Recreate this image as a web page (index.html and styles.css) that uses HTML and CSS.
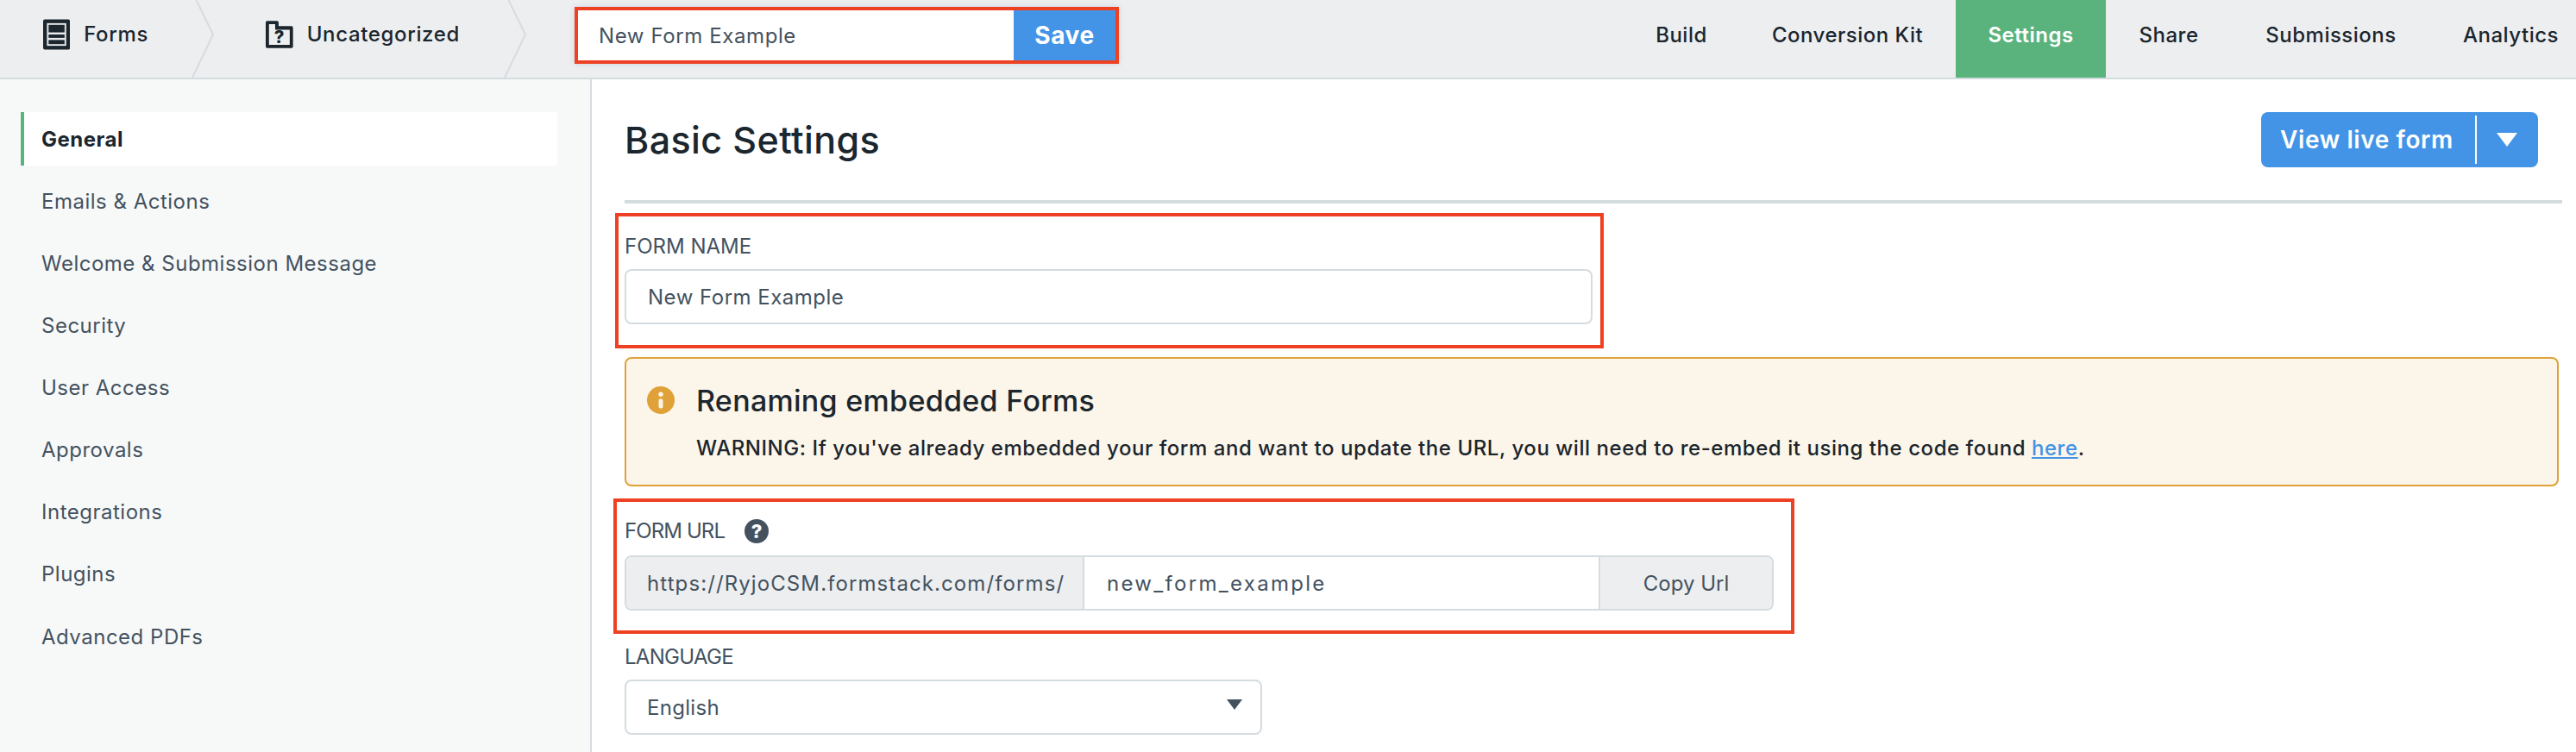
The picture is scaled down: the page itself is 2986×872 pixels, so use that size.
FILE: index.html
```html
<!DOCTYPE html>
<html lang="en">
<head>
<meta charset="utf-8">
<title>Basic Settings</title>
<link rel="stylesheet" href="styles.css">
</head>
<body>
<header class="topbar">
  <div class="crumb crumb-forms">
    <svg viewBox="0 0 32 36" width="32" height="36"><rect width="32" height="36" rx="2" fill="#1b262e"/><rect x="4.5" y="4.5" width="23" height="27" fill="#e8eaec"/><rect x="6.5" y="6.5" width="19" height="9" fill="#1b262e"/><rect x="6.5" y="18" width="19" height="4" fill="#1b262e"/><rect x="6.5" y="24.5" width="19" height="5" fill="#1b262e"/></svg>
    <span class="crumb-text">Forms</span>
  </div>
  <svg class="chev chev-a" viewBox="0 0 26 90" width="26" height="90"><path d="M5.5 0 L25 40 L1 90" fill="none" stroke="#d5dcdf" stroke-width="2"/></svg>
  <div class="crumb crumb-unc">
    <svg viewBox="0 0 36 36" width="36" height="36"><path d="M2 0H15a2 2 0 0 1 2 2V7H34a2 2 0 0 1 2 2V34a2 2 0 0 1-2 2H2a2 2 0 0 1-2-2V2a2 2 0 0 1 2-2Z" fill="#1b262e"/><path d="M4.3 4.3H12.5V11.6H31.7V31.7H4.3Z" fill="#edeef0"/><text x="18" y="29" text-anchor="middle" class="folder-q">?</text></svg>
    <span class="crumb-text">Uncategorized</span>
  </div>
  <svg class="chev chev-b" viewBox="0 0 26 90" width="26" height="90"><path d="M5.5 0 L25 40 L1 90" fill="none" stroke="#d5dcdf" stroke-width="2"/></svg>
  <div class="namebox">
    <span class="name-field">New Form Example</span>
    <button class="save">Save</button>
  </div>
  <nav class="tabs">
    <a class="tab">Build</a>
    <a class="tab">Conversion Kit</a>
    <a class="tab tab-active">Settings</a>
    <a class="tab">Share</a>
    <a class="tab">Submissions</a>
    <a class="tab">Analytics</a>
  </nav>
</header>
<div class="page">
  <aside class="side">
    <a class="side-item side-active">General</a>
    <a class="side-item">Emails &amp; Actions</a>
    <a class="side-item">Welcome &amp; Submission Message</a>
    <a class="side-item">Security</a>
    <a class="side-item">User Access</a>
    <a class="side-item">Approvals</a>
    <a class="side-item">Integrations</a>
    <a class="side-item">Plugins</a>
    <a class="side-item">Advanced PDFs</a>
  </aside>
  <main class="main">
    <div class="head">
      <h1 class="title">Basic Settings</h1>
      <div class="live">
        <span class="live-text">View live form</span>
        <span class="live-div"></span>
        <span class="tri tri-white"></span>
      </div>
    </div>
    <hr class="rule">
    <section class="annot annot-name">
      <label class="label">FORM NAME</label>
      <div class="input">New Form Example</div>
    </section>
    <section class="alert">
      <div class="alert-head">
        <svg viewBox="0 0 32 32" width="32" height="32"><circle cx="16" cy="16" r="16" fill="#dfa138"/><circle cx="16" cy="9.3" r="2.7" fill="#fcf5e9"/><rect x="13.5" y="14.5" width="5" height="11" rx="2" fill="#fcf5e9"/></svg>
        <h2 class="alert-title">Renaming embedded Forms</h2>
      </div>
      <p class="alert-body">WARNING: If you've already embedded your form and want to update the URL, you will need to re-embed it using the code found <a class="link">here</a>.</p>
    </section>
    <section class="annot annot-url">
      <div class="label-row">
        <label class="label label-url">FORM URL</label>
        <svg viewBox="0 0 28 28" width="28" height="28"><circle cx="14" cy="14" r="14" fill="#44525f"/><text x="14" y="22" text-anchor="middle" class="help-q">?</text></svg>
      </div>
      <div class="group">
        <span class="prefix">https://RyjoCSM.formstack.com/forms/</span>
        <span class="slug">new_form_example</span>
        <span class="copy">Copy Url</span>
      </div>
    </section>
    <label class="label label-lang">LANGUAGE</label>
    <div class="select">
      <span class="select-text">English</span>
      <span class="tri tri-dark"></span>
    </div>
  </main>
</div>
</body>
</html>
```
FILE: styles.css
```css
* { box-sizing: border-box; }
html, body { margin: 0; padding: 0; }
body {
  width: 2986px;
  height: 872px;
  overflow: hidden;
  background: #fff;
  font-family: Inter, "Noto Sans", sans-serif;
  font-size: 24px;
  color: #44525f;
}
.topbar {
  display: flex;
  align-items: flex-start;
  height: 92px;
  background: #edeef0;
  border-bottom: 2px solid #d5dcdf;
  overflow: hidden;
}
.crumb {
  flex: none;
  display: flex;
  align-items: center;
  height: 80px;
  color: #1b262e;
  font-weight: 500;
  letter-spacing: .65px;
}
.crumb-forms { width: 122px; margin-left: 50px; gap: 16px; }
.crumb-unc { width: 225px; margin-left: 60px; gap: 16px; }
.crumb-text { line-height: 1; white-space: nowrap; }
.folder-q { font: 800 23px Inter, sans-serif; fill: #1b262e; }
.chev { flex: none; }
.chev-a { margin-left: 50px; }
.chev-b { margin-left: 51px; }
.namebox {
  flex: none;
  display: flex;
  width: 631px;
  height: 66px;
  margin: 8px 0 0 56px;
  border: 4px solid #ee4023;
  box-shadow: 0 0 6px rgba(120, 150, 170, .3);
}
.name-field {
  flex: 1;
  display: flex;
  align-items: center;
  padding-left: 24px;
  background: #fff;
  white-space: nowrap;
  letter-spacing: .6px;
}
.save {
  width: 118px;
  border: 0;
  padding: 0;
  background: #4394e6;
  color: #fff;
  font: 700 28px Inter, sans-serif;
  letter-spacing: .6px;
}
.tabs {
  display: grid;
  grid-template-columns: 134px 251px 174px 146px 230px 187px;
  margin-left: auto;
  margin-right: -18px;
  height: 90px;
}
.tab {
  display: flex;
  align-items: center;
  justify-content: center;
  padding-bottom: 10px;
  color: #1b262e;
  font-weight: 500;
  letter-spacing: .5px;
  white-space: nowrap;
}
.tab-active { background: #5ab37c; color: #fff; font-weight: 600; }

.page { display: flex; height: 780px; }
.side {
  flex: none;
  width: 686px;
  padding: 38px 38px 0 24px;
  background: #f7f9f9;
  border-right: 2px solid #d5dcdf;
}
.side-item {
  display: flex;
  align-items: center;
  height: 62px;
  margin-bottom: 10.125px;
  padding-left: 24px;
  white-space: nowrap;
  letter-spacing: .5px;
}
.side-active {
  padding-left: 20px;
  background: #fff;
  border-left: 4px solid #5ab37c;
  color: #1b262e;
  font-weight: 700;
}

.main { flex: 1; min-width: 0; padding: 0 16px 0 38px; }
.head { display: flex; align-items: center; justify-content: space-between; height: 140px; padding-right: 28px; }
.title { margin: 0; font-size: 43px; font-weight: 500; letter-spacing: .4px; color: #1b262e; }
.live {
  display: flex;
  align-items: center;
  width: 321px;
  height: 64px;
  padding-left: 22px;
  background: #4394e6;
  border-radius: 8px;
  color: #fff;
  font-size: 28px;
  font-weight: 600;
  letter-spacing: .6px;
}
.live-text { width: 226px; white-space: nowrap; }
.live-div { width: 2px; height: 56px; background: #fff; }
.tri { width: 0; height: 0; display: block; }
.tri-white {
  margin-left: 23px;
  border-left: 12.5px solid transparent;
  border-right: 12.5px solid transparent;
  border-top: 16px solid #fff;
}
.rule { height: 4px; margin: 0 0 11px; border: 0; background: #d5dcdf; }
.annot { border: 4px solid #ee4023; }
.annot-name { width: 1146px; height: 157px; margin-left: -11px; padding: 23px 9px 0 7px; }
.label { display: block; font-size: 24px; line-height: 24px; color: #44525f; }
.input {
  display: flex;
  align-items: center;
  height: 64px;
  margin-top: 14px;
  padding-left: 25px;
  border: 2px solid #d5dcdf;
  border-radius: 8px;
  letter-spacing: .5px;
}
.alert {
  height: 150px;
  margin: 10px 4px 0 0;
  padding: 32px 24px 0;
  background: #fcf5e9;
  border: 2px solid #dfa138;
  border-radius: 8px;
}
.alert-head { display: flex; align-items: center; gap: 25px; height: 32px; }
.alert-title { margin: 0; font-size: 34px; font-weight: 500; letter-spacing: .3px; color: #1b262e; white-space: nowrap; }
.alert-body { margin: 25px 0 0 57px; line-height: 30px; color: #1b262e; font-weight: 500; letter-spacing: .55px; white-space: nowrap; }
.link { color: #4394e6; text-decoration: underline; }
.annot-url { width: 1369px; height: 157px; margin: 14px 0 0 -13px; padding: 20px 0 0 9px; }
.label-row { display: flex; align-items: center; gap: 23px; height: 28px; }
.label-url { letter-spacing: -.9px; }
.help-q { font: 800 22px Inter, sans-serif; fill: #fff; }
.group {
  display: flex;
  width: 1332px;
  height: 64px;
  margin-top: 14px;
  border: 2px solid #d5dcdf;
  border-radius: 8px;
  overflow: hidden;
}
.prefix { display: flex; align-items: center; width: 531px; padding-left: 24px; background: #edeef0; white-space: nowrap; border-right: 2px solid #d5dcdf; letter-spacing: 1.1px; }
.slug { display: flex; align-items: center; width: 598px; padding-left: 26px; border-right: 2px solid #d5dcdf; white-space: nowrap; letter-spacing: 2.3px; }
.copy { flex: 1; display: flex; align-items: center; justify-content: center; background: #edeef0; white-space: nowrap; }
.label-lang { margin-top: 15px; letter-spacing: -.7px; }
.select {
  display: flex;
  align-items: center;
  justify-content: space-between;
  width: 739px;
  height: 64px;
  margin-top: 14px;
  padding: 0 21px 0 24px;
  border: 2px solid #d5dcdf;
  border-radius: 8px;
  letter-spacing: .3px;
}
.tri-dark {
  margin-bottom: 6px;
  border-left: 9px solid transparent;
  border-right: 9px solid transparent;
  border-top: 12px solid #44525f;
}
```
